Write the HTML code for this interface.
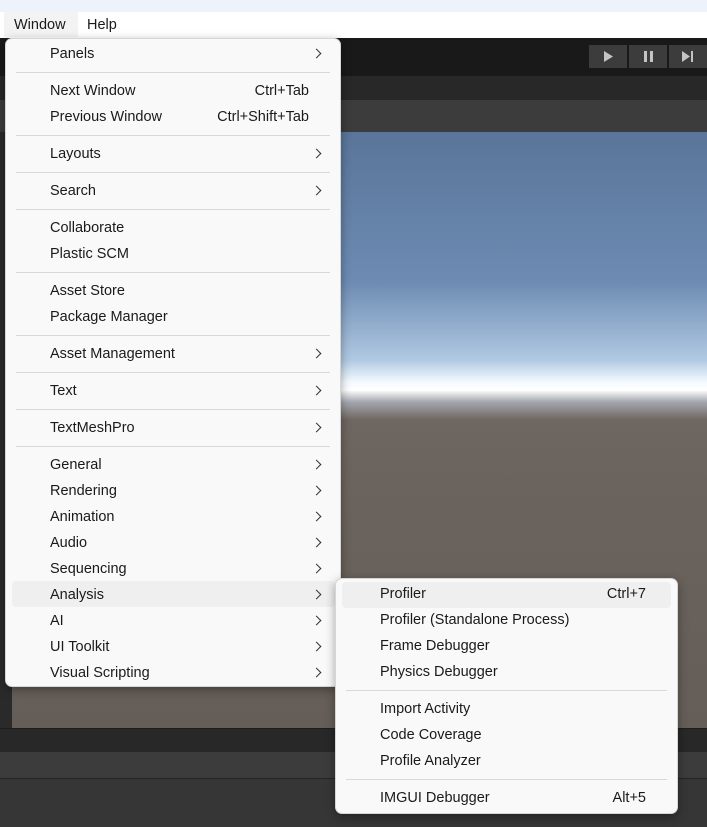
<!DOCTYPE html>
<html><head><style>
*{margin:0;padding:0;box-sizing:border-box}
body{width:707px;height:827px;overflow:hidden;position:relative;font-family:"Segoe UI","Liberation Sans",sans-serif;font-size:14.5px;color:#1a1a1a;background:#363636}
.a{position:absolute}
.menu{position:absolute;background:#f9f9f9;border:1px solid #d6d6d6;border-radius:7px;box-shadow:0 3px 10px rgba(0,0,0,.35)}
.it{position:absolute;left:0;right:0;height:26px;line-height:26px}
.it .t{position:absolute}
.it .k{position:absolute;text-align:right}
.sep{position:absolute;height:1px;background:#d9d9d9}
.hl{position:absolute;background:#efefef;border-radius:4px}
.ar{position:absolute;width:7px;height:7px;border-top:1.3px solid #333;border-right:1.3px solid #333;transform:rotate(45deg)}
</style></head><body>
<div class="a" style="left:0;top:0;width:707px;height:12px;background:#eef2fa"></div>
<div class="a" style="left:0;top:12px;width:707px;height:26px;background:#fff"></div>
<div class="a" style="left:4px;top:12px;width:74px;height:25px;background:#f3f3f3"></div>
<div class="a" style="left:14px;top:13px;line-height:24px">Window</div>
<div class="a" style="left:87px;top:13px;line-height:24px">Help</div>
<div class="a" style="left:0;top:38px;width:707px;height:38px;background:#191919"></div>
<div class="a" style="left:589px;top:45px;width:38px;height:23px;background:#3c3c3c"></div>
<div class="a" style="left:629px;top:45px;width:38px;height:23px;background:#3c3c3c"></div>
<div class="a" style="left:669px;top:45px;width:38px;height:23px;background:#3c3c3c"></div>
<svg class="a" style="left:589px;top:45px" width="118" height="23"><path d="M15 6 L24 11.5 L15 17Z" fill="#c4c4c4"/><rect x="55" y="6" width="3" height="11" fill="#c4c4c4"/><rect x="61" y="6" width="3" height="11" fill="#c4c4c4"/><path d="M93 6 L101 11.5 L93 17Z" fill="#c4c4c4"/><rect x="102" y="6" width="2" height="11" fill="#c4c4c4"/></svg>
<div class="a" style="left:0;top:76px;width:707px;height:24px;background:#282828"></div>
<div class="a" style="left:0;top:100px;width:707px;height:32px;background:#3c3c3c"></div>
<div class="a" style="left:0;top:132px;width:12px;height:596px;background:#2a2a2a"></div>
<div class="a" style="left:12px;top:132px;width:695px;height:596px;background:linear-gradient(#5a7599 0px,#6d8bb3 150px,#b0c9e2 228px,#f3faff 250px,#fff 258px,#a4a6ae 270px,#6e6660 288px,#6b635d 350px,#655e58 596px)"></div>
<div class="a" style="left:0;top:728px;width:707px;height:24px;background:#282828;border-top:1px solid #1d1d1d"></div>
<div class="a" style="left:0;top:752px;width:707px;height:27px;background:#3c3c3c;border-bottom:1px solid #252525"></div>

<div class="menu" style="left:5px;top:38px;width:336px;height:649px">
<div class="hl" style="left:6px;top:542px;width:323px;height:26px"></div>
<div id="m1"></div>
</div>
<div class="menu" style="left:335px;top:578px;width:343px;height:236px">
<div class="hl" style="left:6px;top:3px;width:329px;height:26px"></div>
<div id="m2"></div>
</div>
<script>
function build(id,items,tx,kx,ax,sl,sw,y0){var el=document.getElementById(id),y=y0,h='';
items.forEach(function(i){if(i==='-'){h+='<div class="sep" style="left:'+sl+'px;width:'+sw+'px;top:'+(y+5)+'px"></div>';y+=11;return}
h+='<div class="it" style="top:'+y+'px"><span class="t" style="left:'+tx+'px">'+i[0]+'</span>';
if(i[1])h+='<span class="k" style="right:'+kx+'px">'+i[1]+'</span>';
if(i[2])h+='<span class="ar" style="left:'+ax+'px;top:9px"></span>';
h+='</div>';y+=26});el.innerHTML=h}
build('m1',[['Panels','',1],'-',['Next Window','Ctrl+Tab'],['Previous Window','Ctrl+Shift+Tab'],'-',['Layouts','',1],'-',['Search','',1],'-',['Collaborate'],['Plastic SCM'],'-',['Asset Store'],['Package Manager'],'-',['Asset Management','',1],'-',['Text','',1],'-',['TextMeshPro','',1],'-',['General','',1],['Rendering','',1],['Animation','',1],['Audio','',1],['Sequencing','',1],['Analysis','',1],['AI','',1],['UI Toolkit','',1],['Visual Scripting','',1]],44,31,307,10,314,2);
build('m2',[['Profiler','Ctrl+7'],['Profiler (Standalone Process)'],['Frame Debugger'],['Physics Debugger'],'-',['Import Activity'],['Code Coverage'],['Profile Analyzer'],'-',['IMGUI Debugger','Alt+5']],44,31,0,10,321,2);
</script>
</body></html>
